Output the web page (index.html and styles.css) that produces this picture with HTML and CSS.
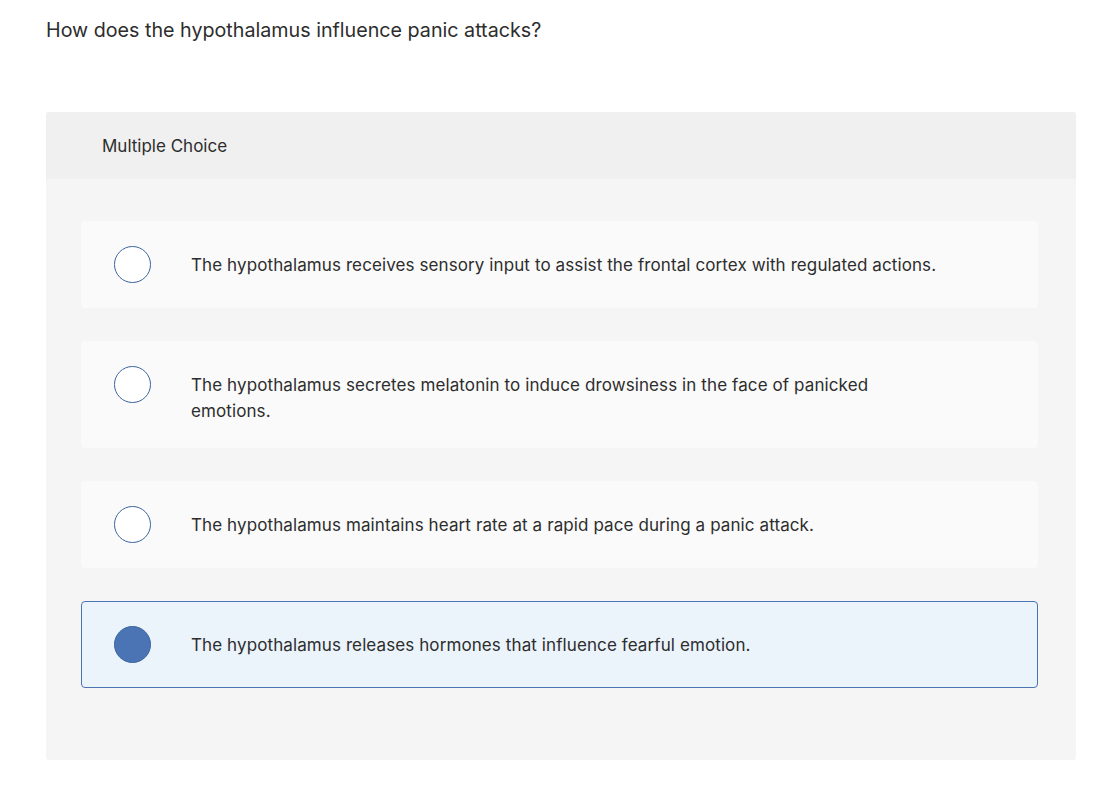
FILE: index.html
```html
<!DOCTYPE html>
<html lang="en">
<head>
<meta charset="utf-8">
<title>Question</title>
<link rel="stylesheet" href="styles.css">
</head>
<body>
<div class="page">
  <h1 class="question">How does the hypothalamus influence panic attacks?</h1>
  <section class="card">
    <div class="card-header">Multiple Choice</div>
    <div class="card-body">
      <div class="option">
        <span class="radio"></span>
        <span class="option-text">The hypothalamus receives sensory input to assist the frontal cortex with regulated actions.</span>
      </div>
      <div class="option">
        <span class="radio"></span>
        <span class="option-text">The hypothalamus secretes melatonin to induce drowsiness in the face of panicked emotions.</span>
      </div>
      <div class="option">
        <span class="radio"></span>
        <span class="option-text">The hypothalamus maintains heart rate at a rapid pace during a panic attack.</span>
      </div>
      <div class="option selected">
        <span class="radio"></span>
        <span class="option-text">The hypothalamus releases hormones that influence fearful emotion.</span>
      </div>
    </div>
  </section>
</div>
</body>
</html>
```

FILE: styles.css
```css
html, body {
  margin: 0;
  padding: 0;
  background: #ffffff;
}

body {
  font-family: "Inter", "Open Sans", sans-serif;
  color: #2d2d2d;
}

.page {
  padding: 17px 34px 0 46px;
}

.question {
  margin: 0;
  font-size: 19.7px;
  font-weight: 400;
  line-height: 26px;
  color: #2d2d2d;
}

.card {
  margin-top: 69px;
  width: 1030px;
  background: #f5f5f5;
  border-radius: 3px;
  overflow: hidden;
}

.card-header {
  background: #f0f0f0;
  height: 67px;
  display: flex;
  align-items: center;
  padding-left: 56px;
  font-size: 17px;
  color: #2d2d2d;
}

.card-body {
  padding: 42px 38px 72px 35px;
  display: flex;
  flex-direction: column;
  gap: 33px;
}

.option {
  display: flex;
  align-items: flex-start;
  background: #fafafa;
  border: 1px solid #fafafa;
  border-radius: 4px;
  padding: 24px 30px 24px 32px;
}

.option.selected {
  background: #ebf3fb;
  border-color: #4a74b4;
}

.radio {
  flex: none;
  width: 35px;
  height: 35px;
  border: 1px solid #3c659f;
  border-radius: 50%;
  background: #ffffff;
  box-sizing: content-box;
}

.selected .radio {
  background: #4a74b4;
  border-color: #3c659f;
}

.option-text {
  margin-left: 40px;
  margin-top: 6px;
  margin-bottom: -1px;
  font-size: 17px;
  letter-spacing: 0.1px;
  line-height: 26px;
  max-width: 752px;
}
```
